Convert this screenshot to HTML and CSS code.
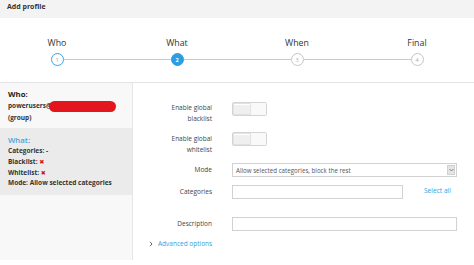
FILE: index.html
```html
<!DOCTYPE html>
<html>
<head>
<meta charset="utf-8">
<link rel="stylesheet" href="styles.css">
</head>
<body>
<div class="page">
  <div class="topbar">Add profile</div>
  <div class="steps">
    <div class="step done">
      <div class="step-label">Who</div>
      <div class="node"><span class="seg blank"></span><span class="dot">1</span><span class="seg"></span></div>
    </div>
    <div class="step active">
      <div class="step-label">What</div>
      <div class="node"><span class="seg"></span><span class="dot">2</span><span class="seg"></span></div>
    </div>
    <div class="step">
      <div class="step-label">When</div>
      <div class="node"><span class="seg"></span><span class="dot">3</span><span class="seg"></span></div>
    </div>
    <div class="step">
      <div class="step-label">Final</div>
      <div class="node"><span class="seg"></span><span class="dot">4</span><span class="seg blank"></span></div>
    </div>
  </div>
  <div class="main">
    <aside class="summary">
      <div class="sum-who">
        <div class="sum-title">Who:</div>
        <div class="sum-line">powerusers@<span class="redact"></span></div>
        <div class="sum-line">(group)</div>
      </div>
      <div class="sum-what">
        <div class="sum-title blue">What:</div>
        <div class="sum-line">Categories: -</div>
        <div class="sum-line">Blacklist: <span class="x">&#10006;</span></div>
        <div class="sum-line">Whitelist: <span class="x">&#10006;</span></div>
        <div class="sum-line">Mode: Allow selected categories</div>
      </div>
      <div class="sum-rest"></div>
    </aside>
    <div class="form">
      <div class="row r1">
        <div class="label two">Enable global<br>blacklist</div>
        <div class="toggle"><span class="knob"></span><span class="off"></span></div>
      </div>
      <div class="row r2">
        <div class="label two">Enable global<br>whitelist</div>
        <div class="toggle"><span class="knob"></span><span class="off"></span></div>
      </div>
      <div class="row r3">
        <div class="label one">Mode</div>
        <div class="select wide"><span class="select-text">Allow selected categories, block the rest</span><span class="arrow"><svg width="5" height="4" viewBox="0 0 5 4"><polyline points="0.5,1 2.5,3 4.5,1" fill="none" stroke="#777" stroke-width="0.9"/></svg></span></div>
      </div>
      <div class="row r4">
        <div class="label one">Categories</div>
        <div class="input short"></div>
        <a class="link selectall">Select all</a>
      </div>
      <div class="row r5">
        <div class="label one">Description</div>
        <div class="input wide"></div>
      </div>
      <div class="advanced"><svg class="chev" width="4" height="6" viewBox="0 0 4 6"><polyline points="1,0.8 3,3 1,5.2" fill="none" stroke="#555" stroke-width="0.9"/></svg><a class="link">Advanced options</a></div>
    </div>
  </div>
</div>
</body>
</html>
```
FILE: styles.css
```css
* { box-sizing: border-box; }
body {
  margin: 0;
  font-family: "Open Sans", "DejaVu Sans", sans-serif;
  color: #333;
  background: #fff;
}
.page { width: 474px; height: 265px; overflow: hidden; }
.topbar {
  height: 18px;
  background: #f3f3f3;
  font-weight: 700;
  font-size: 7px;
  line-height: 14px;
  padding-left: 7px;
  color: #333;
}
.steps {
  display: grid;
  grid-template-columns: repeat(4, 120px);
  justify-content: center;
  padding-top: 19px;
  height: 65px;
  border-bottom: 1px solid #e4e4e4;
}
.step { display: flex; flex-direction: column; align-items: stretch; }
.step-label {
  text-align: center;
  font-size: 8.8px;
  line-height: 12px;
  color: #333;
}
.node {
  display: flex;
  align-items: center;
  margin-top: 4px;
  height: 13px;
}
.seg { flex: 1; height: 1px; background: #c9c9c9; }
.seg.blank { background: transparent; }
.dot {
  width: 13px;
  height: 13px;
  border-radius: 50%;
  border: 1.3px solid #c6c6c6;
  background: #fff;
  color: #aaa;
  font-size: 5.5px;
  display: flex;
  align-items: center;
  justify-content: center;
}
.done .dot { border-color: #3da3dc; color: #999; }
.active .dot { background: #2e9de0; border-color: #2e9de0; color: #fff; font-weight: 700; }
.main { display: flex; }
.summary {
  width: 133px;
  height: 177px;
  border-right: 1px solid #e6e6e6;
  display: flex;
  flex-direction: column;
  font-size: 6.5px;
  font-weight: 700;
  color: #333;
}
.sum-who {
  background: #f8f8f8;
  height: 45px;
  padding: 6px 8px 0;
}
.sum-what {
  background: #ebebeb;
  height: 67px;
  padding: 7px 8px 0;
}
.sum-rest { background: #f8f8f8; flex: 1; }
.sum-title { font-size: 7.8px; line-height: 11px; color: #222; }
.sum-title.blue { color: #4aa3d8; font-weight: 600; }
.sum-line { line-height: 11px; white-space: nowrap; }
.sum-what .sum-line { line-height: 10.8px; }
.redact {
  display: inline-block;
  width: 67px;
  height: 11px;
  background: #e4161d;
  border-radius: 6px;
  vertical-align: middle;
  margin-left: -3px;
}
.x { color: #d0121b; font-size: 6px; }
.form {
  flex: 1;
  padding-top: 19px;
  font-size: 6.5px;
  color: #444;
}
.row { display: flex; align-items: flex-start; }
.label {
  width: 79px;
  margin-right: 20px;
  text-align: right;
  color: #444;
}
.label.two { line-height: 11px; }
.label.one { line-height: 14px; }
.r1 { height: 22px; }
.r2 { margin-top: 8px; height: 22px; }
.r2 .label { padding-top: 1px; }
.r3 { margin-top: 9px; }
.r4 { margin-top: 8px; }
.r5 { margin-top: 18px; }
.toggle {
  width: 35px;
  height: 14px;
  border: 1px solid #d4d4d4;
  border-radius: 2px;
  display: flex;
  background: #fafafa;
}
.knob {
  flex: 1;
  background: #efefef;
  border: 1px solid #e2e2e2;
  box-shadow: inset 0 1px 1px #fff;
}
.off { flex: 1; background: #f9f9f9; }
.select, .input {
  height: 14px;
  border: 1px solid #d2d2d2;
  background: #fff;
}
.wide { width: 225px; }
.short { width: 171px; height: 14px; }
.select {
  display: flex;
  align-items: center;
  justify-content: space-between;
  padding-left: 3px;
  padding-right: 1px;
}
.select-text { font-size: 6.2px; color: #555; }
.arrow {
  width: 8px;
  height: 10px;
  background: #e4e4e4;
  border: 1px solid #d0d0d0;
  display: flex;
  align-items: center;
  justify-content: center;
}
.link { color: #2d9fdc; cursor: pointer; }
.selectall { margin-left: 21px; line-height: 12px; font-size: 6.6px; }
.advanced {
  margin-top: 7px;
  padding-left: 16px;
  line-height: 12px;
  display: flex;
  align-items: center;
  font-size: 6.5px;
}
.chev { margin-right: 5px; }
```
